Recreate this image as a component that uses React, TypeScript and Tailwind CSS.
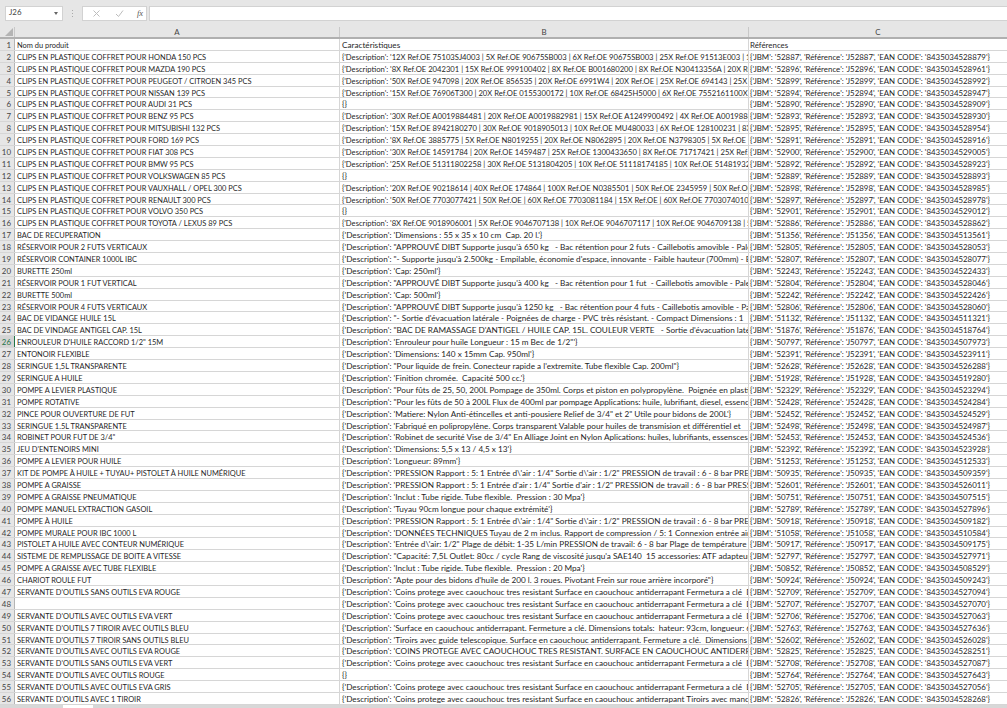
import React from "react";

const d = (s: string) => `{'Description': ${s}`;
const coins = "'Coins protege avec caouchouc tres resistant Surface en caouchouc antiderrapant Fermetura a clé  Dimensions";

const rows: [string, string, string | null][] = [
  ["CLIPS EN PLASTIQUE COFFRET POUR HONDA 150 PCS", d("'12X Ref.OE 75103SJ4003 | 5X Ref.OE 90675SB003 | 6X Ref.OE 90675SB003 | 25X Ref.OE 91513E003 | 10X"), "52887|8435034528879"],
  ["CLIPS EN PLASTIQUE COFFRET POUR MAZDA 190 PCS", d("'8X Ref.OE 2042301 | 15X Ref.OE 999100402 | 8X Ref.OE B001680200 | 8X Ref.OE N30413356A | 20X Ref.OE"), "52896|8435034528961"],
  ["CLIPS EN PLASTIQUE COFFRET POUR PEUGEOT / CITROEN 345 PCS", d("'50X Ref.OE 947098 | 20X Ref.OE 856535 | 20X Ref.OE 6991W4 | 20X Ref.OE | 25X Ref.OE 694143 | 25X Ref.OE"), "52899|8435034528992"],
  ["CLIPS EN PLASTIQUE COFFRET POUR NISSAN 139 PCS", d("'15X Ref.OE 76906T300 | 20X Ref.OE 0155300172 | 10X Ref.OE 68425H5000 | 6X Ref.OE 7552161100X"), "52894|8435034528947"],
  ["CLIPS EN PLASTIQUE COFFRET POUR AUDI 31 PCS", "{}", "52890|8435034528909"],
  ["CLIPS EN PLASTIQUE COFFRET POUR BENZ 95 PCS", d("'30X Ref.OE A0019884481 | 20X Ref.OE A0019882981 | 15X Ref.OE A1249900492 | 4X Ref.OE A00198846"), "52893|8435034528930"],
  ["CLIPS EN PLASTIQUE COFFRET POUR MITSUBISHI 132 PCS", d("'15X Ref.OE 8942180270 | 30X Ref.OE 9018905013 | 10X Ref.OE MU480033 | 6X Ref.OE 128100231 | 8X"), "52895|8435034528954"],
  ["CLIPS EN PLASTIQUE COFFRET POUR FORD 169 PCS", d("'8X Ref.OE 3885775 | 5X Ref.OE N8019255 | 20X Ref.OE N8062895 | 20X Ref.OE N3798305 | 5X Ref.OE 1234"), "52891|8435034528916"],
  ["CLIPS EN PLASTIQUE COFFRET POUR FIAT 308 PCS", d("'30X Ref.OE 14591784 | 20X Ref.OE 1459487 | 25X Ref.OE 1300433650 | 8X Ref.OE 71717421 | 25X Ref.OE"), "52900|8435034529005"],
  ["CLIPS EN PLASTIQUE COFFRET POUR BMW 95 PCS", d("'25X Ref.OE 51311802258 | 30X Ref.OE 5131804205 | 10X Ref.OE 51118174185 | 10X Ref.OE 514819323"), "52892|8435034528923"],
  ["CLIPS EN PLASTIQUE COFFRET POUR VOLKSWAGEN 85 PCS", "{}", "52889|8435034528893"],
  ["CLIPS EN PLASTIQUE COFFRET POUR VAUXHALL / OPEL 300 PCS", d("'20X Ref.OE 90218614 | 40X Ref.OE 174864 | 100X Ref.OE N0385501 | 50X Ref.OE 2345959 | 50X Ref.OE 12"), "52898|8435034528985"],
  ["CLIPS EN PLASTIQUE COFFRET POUR RENAULT 300 PCS", d("'50X Ref.OE 7703077421 | 50X Ref.OE | 60X Ref.OE 7703081184 | 15X Ref.OE | 60X Ref.OE 7703074010"), "52897|8435034528978"],
  ["CLIPS EN PLASTIQUE COFFRET POUR VOLVO 350 PCS", "{}", "52901|8435034529012"],
  ["CLIPS EN PLASTIQUE COFFRET POUR TOYOTA / LEXUS 89 PCS", d("'8X Ref.OE 9018906001 | 5X Ref.OE 9046707138 | 10X Ref.OE 9046707117 | 10X Ref.OE 9046709138 | 5X"), "52886|8435034528862"],
  ["BAC DE RECUPERATION", d("'Dimensions : 55 x 35 x 10 cm  Cap. 20 l.'}"), "51356|8435034513561"],
  ["RÉSERVOIR POUR 2 FUTS VERTICAUX", d("\"APPROUVÉ DIBT Supporte jusqu'à 650 kg   - Bac rétention pour 2 futs - Caillebotis amovible - Palette"), "52805|8435034528053"],
  ["RÉSERVOIR CONTAINER 1000L IBC", d("\"- Supporte jusqu'à 2.500kg - Empilable, économie d'espace, innovante - Faible hauteur (700mm) - Bac"), "52807|8435034528077"],
  ["BURETTE 250ml", d("'Cap: 250ml'}"), "52243|8435034522433"],
  ["RÉSERVOIR POUR 1 FUT VERTICAL", d("\"APPROUVÉ DIBT Supporte jusqu'à 400 kg   - Bac rétention pour 1 fut  - Caillebotis amovible - Palette"), "52804|8435034528046"],
  ["BURETTE 500ml", d("'Cap: 500ml'}"), "52242|8435034522426"],
  ["RÉSERVOIR POUR 4 FUTS VERTICAUX", d("\"APPROUVÉ DIBT Supporte jusqu'à 1250 kg   - Bac rétention pour 4 futs - Caillebotis amovible - Palette"), "52806|8435034528060"],
  ["BAC DE VIDANGE HUILE 15L", d("\"- Sortie d'évacuation latérale - Poignées de charge - PVC très résistant. - Compact Dimensions : 1"), "51132|8435034511321"],
  ["BAC DE VINDAGE ANTIGEL CAP. 15L", d("\"BAC DE RAMASSAGE D'ANTIGEL / HUILE CAP. 15L. COULEUR VERTE   - Sortie d'évacuation latérale - Poignées"), "51876|8435034518764"],
  ["ENROULEUR D'HUILE RACCORD 1/2\" 15M", d("'Enrouleur pour huile Longueur : 15 m Bec de 1/2\"'}"), "50797|8435034507973"],
  ["ENTONOIR FLEXIBLE", d("'Dimensions: 140 x 15mm Cap. 950ml'}"), "52391|8435034523911"],
  ["SERINGUE 1,5L TRANSPARENTE", d("\"Pour liquide de frein. Conecteur rapide a l'extremite. Tube flexible Cap. 200ml\"}"), "52628|8435034526288"],
  ["SERINGUE A HUILE", d("'Finition chromée.  Capacité 500 cc.'}"), "51928|8435034519280"],
  ["POMPE A LEVIER PLASTIQUE", d("\"Pour fûts de 25, 50, 200L Pompage de 350ml. Corps et piston en polypropylène.  Poignée en plastique"), "52329|8435034523294"],
  ["POMPE ROTATIVE", d("\"Pour les fûts de 50 à 200L Flux de 400ml par pompage Applications: huile, lubrifiant, diesel, essence"), "52428|8435034524284"],
  ["PINCE POUR OUVERTURE DE FUT", d("'Matiere: Nylon Anti-étincelles et anti-pousiere Relief de 3/4\" et 2\" Utile pour bidons de 200L'}"), "52452|8435034524529"],
  ["SERINGUE 1.5L TRANSPARENTE", d("'Fabriqué en polipropylène. Corps transparent Valable pour huiles de transmision et différentiel et"), "52498|8435034524987"],
  ["ROBINET POUR FUT DE 3/4\"", d("'Robinet de securité Vise de 3/4\" En Alliage Joint en Nylon Aplications: huiles, lubrifiants, essensces"), "52453|8435034524536"],
  ["JEU D'ENTENOIRS MINI", d("'Dimensions: 5,5 x 13 / 4,5 x 13'}"), "52392|8435034523928"],
  ["POMPE A LEVIER POUR HUILE", d("'Longueur: 89mm'}"), "51253|8435034512533"],
  ["KIT DE POMPE À HUILE + TUYAU+ PISTOLET À HUILE NUMÉRIQUE", d("'PRESSION Rapport : 5: 1 Entrée d\\'air : 1/4\" Sortie d\\'air : 1/2\" PRESSION de travail : 6 - 8 bar PRESSION"), "50935|8435034509359"],
  ["POMPE A GRAISSE", d("'PRESSION Rapport : 5: 1 Entrée d'air : 1/4\" Sortie d'air : 1/2\" PRESSION de travail : 6 - 8 bar PRESSION"), "52601|8435034526011"],
  ["POMPE A GRAISSE PNEUMATIQUE", d("'Inclut : Tube rigide. Tube flexible.  Pression : 30 Mpa'}"), "50751|8435034507515"],
  ["POMPE MANUEL EXTRACTION GASOIL", d("'Tuyau 90cm longue pour chaque extrémité'}"), "52789|8435034527896"],
  ["POMPE À HUILE", d("'PRESSION Rapport : 5: 1 Entrée d\\'air : 1/4\" Sortie d\\'air : 1/2\" PRESSION de travail : 6 - 8 bar PRESSION"), "50918|8435034509182"],
  ["POMPE MURALE POUR IBC 1000 L", d("'DONNÉES TECHNIQUES Tuyau de 2 m inclus. Rapport de compression / 5: 1 Connexion entrée air"), "51058|8435034510584"],
  ["PISTOLET A HUILE AVEC CONTEUR NUMÉRIQUE", d("'Entrée d\\'air: 1/2\" Plage de débit: 1-35 L/min PRESSION de travail: 6 - 8 bar Plage de température"), "50917|8435034509175"],
  ["SISTEME DE REMPLISSAGE DE BOITE A VITESSE", d("\"Capacité: 7,5L Outlet: 80cc / cycle Rang de viscosité jusqu'a SAE140  15 accessories: ATF adapteur"), "52797|8435034527971"],
  ["POMPE A GRAISSE AVEC TUBE FLEXIBLE", d("'Inclut : Tube rigide. Tube flexible.  Pression : 20 Mpa'}"), "50852|8435034508529"],
  ["CHARIOT ROULE FUT", d("\"Apte pour des bidons d'huile de 200 l. 3 roues. Pivotant Frein sur roue arrière incorporé\"}"), "50924|8435034509243"],
  ["SERVANTE D'OUTILS SANS OUTILS EVA ROUGE", d(coins), "52709|8435034527094"],
  ["", d(coins), "52707|8435034527070"],
  ["SERVANTE D'OUTILS AVEC OUTILS EVA VERT", d(coins), "52706|8435034527063"],
  ["SERVANTE D'OUTILS 7 TIROIR AVEC OUTILS BLEU", d("'Surface en caouchouc antiderrapant. Fermeture a clé. Dimensions totals:  hateur: 93cm, longueur: 68"), "52763|8435034527636"],
  ["SERVANTE D'OUTILS 7 TIROIR SANS OUTILS BLEU", d("'Tiroirs avec guide telescopique. Surface en caouchouc antiderrapant. Fermeture a clé.  Dimensions"), "52602|8435034526028"],
  ["SERVANTE D'OUTILS AVEC OUTILS EVA ROUGE", d("'COINS PROTEGE AVEC CAOUCHOUC TRES RESISTANT. SURFACE EN CAOUCHOUC ANTIDERRAPANT. FER"), "52825|8435034528251"],
  ["SERVANTE D'OUTILS SANS OUTILS EVA VERT", d(coins), "52708|8435034527087"],
  ["SERVANTE D'OUTILS AVEC OUTILS ROUGE", "{}", "52764|8435034527643"],
  ["SERVANTE D'OUTILS AVEC OUTILS EVA GRIS", d(coins), "52705|8435034527056"],
  ["SERVANTE D'OUTILS AVEC 1 TIROIR", d("'Coins protege avec caouchouc tres resistant Surface en caouchouc antiderrapant Tiroirs avec manche"), "52826|8435034528268"],
];

function Row({ n, a, b, c }: { n: number; a: string; b: string; c: string }) {
  const active = n === 26;
  const codes = b.includes("Ref.OE");
  return (
    <div className="flex h-[11.9px] shrink-0 border-b border-[#d6d6d6] bg-white leading-[13px]">
      <div
        className={
          active
            ? "w-[15px] shrink-0 border-r border-[#217346] bg-[#d4d4d4] pr-[3px] text-right text-[7.9px] text-[#217346]"
            : "w-[15px] shrink-0 border-r border-[#b5b5b5] bg-[#e6e6e6] pr-[3px] text-right text-[7.9px] text-[#444444]"
        }
      >
        {n}
      </div>
      <div className="w-[325px] shrink-0 overflow-hidden whitespace-pre border-r border-[#d6d6d6] pl-[2px]">{a}</div>
      <div
        className={
          codes
            ? "w-[409px] shrink-0 overflow-hidden whitespace-pre border-r border-[#d6d6d6] pl-[2px] text-[7.65px]"
            : "w-[409px] shrink-0 overflow-hidden whitespace-pre border-r border-[#d6d6d6] pl-[2px] text-[8.2px]"
        }
      >
        {b}
      </div>
      <div className="min-w-0 flex-1 overflow-hidden whitespace-pre pl-[1px] text-[7.9px]">{c}</div>
    </div>
  );
}

export default function App() {
  return (
    <div className="flex h-[708px] w-[1007px] flex-col overflow-hidden bg-[#e6e6e6] font-['Lato','Noto_Sans',sans-serif] text-[7.45px] text-[#1f1f1f]">
      <div className="flex h-[27px] shrink-0 items-center pb-[1px] pl-[5px]">
        <div className="flex h-[15px] w-[58px] items-center justify-between border border-[#d2d2d2] bg-white pl-[3px] pr-[4px] text-[7.9px] text-[#444444]">
          <span>J26</span>
          <span className="h-0 w-0 border-x-[2.5px] border-t-[3px] border-x-transparent border-t-[#666666]" />
        </div>
        <div className="flex w-[19px] flex-col items-center gap-[2px]">
          <span className="h-[1px] w-[1px] bg-[#aaaaaa]" />
          <span className="h-[1px] w-[1px] bg-[#aaaaaa]" />
          <span className="h-[1px] w-[1px] bg-[#aaaaaa]" />
        </div>
        <div className="flex h-[15px] w-[65px] items-center border border-[#d2d2d2] bg-white pl-[9px] text-[#8c8c8c]">
          <svg width="9" height="9" viewBox="0 0 9 9" fill="none" stroke="#bdbdbd" strokeWidth="1">
            <path d="M1.5 1.5 7.5 7.5M7.5 1.5 1.5 7.5" />
          </svg>
          <svg className="ml-[14px]" width="9" height="9" viewBox="0 0 9 9" fill="none" stroke="#bdbdbd" strokeWidth="1">
            <path d="M1 5 3.5 7.5 8 1.5" />
          </svg>
          <span className="ml-[13px] font-['Liberation_Serif',serif] text-[8.5px] italic text-[#555555]">fx</span>
        </div>
        <div className="ml-[2px] h-[15px] flex-1 border-y border-l border-[#d2d2d2] bg-white" />
      </div>

      <div className="flex h-[12px] shrink-0 border-b-2 border-[#b0b0b0] bg-[#e6e6e6] text-center text-[7.9px] leading-[11px] text-[#444444]">
        <div className="relative w-[15px] shrink-0 border-r border-[#c8c8c8]">
          <span className="absolute bottom-[1px] right-[1px] h-0 w-0 border-b-[8px] border-l-[8px] border-b-[#b4b4b4] border-l-transparent" />
        </div>
        <div className="w-[325px] shrink-0 border-r border-[#c8c8c8]">A</div>
        <div className="w-[409px] shrink-0 border-r border-[#c8c8c8]">B</div>
        <div className="flex-1">C</div>
      </div>

      <div className="flex min-h-0 flex-1 flex-col overflow-hidden">
        <Row n={1} a="Nom du produit" b="Caractéristiques" c="Références" />
        {rows.map(([a, b, c], i) => {
          const [jbm, ean] = (c as string).split("|");
          return (
            <Row
              key={i}
              n={i + 2}
              a={a}
              b={b}
              c={`{'JBM': '${jbm}', 'Référence': 'J${jbm}', 'EAN CODE': '${ean}'}`}
            />
          );
        })}
        <div className="flex flex-1 bg-[#d8d8d8] pl-[63px]">
          <div className="w-[30px] bg-white" />
        </div>
      </div>
    </div>
  );
}
